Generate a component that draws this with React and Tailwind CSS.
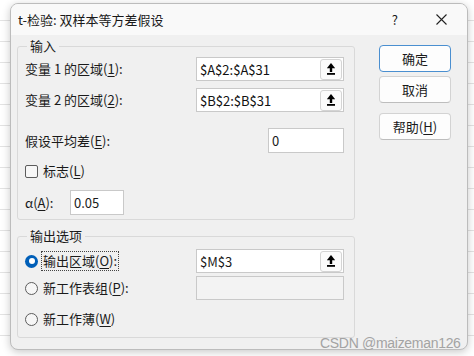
import React from "react";

function UpArrow() {
  return (
    <svg width="10" height="14" viewBox="0 0 10 14">
      <polygon points="5,1 0.8,6.2 9.2,6.2" fill="#000" />
      <rect x="3.8" y="5.5" width="2.4" height="4.5" fill="#000" />
      <rect x="1" y="11" width="8" height="1.8" fill="#000" />
    </svg>
  );
}

function RefInput({ value, w = "w-[148px]" }) {
  return (
    <div className={`${w} h-full bg-white border border-[#c9c9c9] flex items-center justify-between pl-[3px] pr-[1px]`}>
      <span className="text-[13px] leading-none text-[#111]">{value}</span>
      <div className="w-[22px] h-[21px] border border-[#d4d4d4] rounded-[3px] bg-[#fbfbfb] flex items-center justify-center">
        <UpArrow />
      </div>
    </div>
  );
}

function U({ children }) {
  return <span className="underline underline-offset-2">{children}</span>;
}

function Radio({ checked }) {
  return checked ? (
    <div className="w-[13px] h-[13px] rounded-full bg-[#005fb8] flex items-center justify-center">
      <div className="w-[6px] h-[6px] rounded-full bg-white" />
    </div>
  ) : (
    <div className="w-[13px] h-[13px] rounded-full border border-[#5c5c5c] bg-[#f6f6f6]" />
  );
}

export default function App() {
  return (
    <div className="w-[474px] h-[356px] overflow-hidden relative bg-white bg-[repeating-linear-gradient(180deg,transparent_0px,transparent_20px,#e3e3e3_20px,#e3e3e3_21px)] pl-[10px] pt-[3px] font-['Noto_Sans_CJK_SC',sans-serif] text-[#1a1a1a]">
      <div className="w-[458px] h-[347px] rounded-[8px] bg-[#f0f0f0] border border-[#bcbcbc] shadow-[0_2px_8px_rgba(0,0,0,0.22)] flex flex-col overflow-hidden">
        {/* title bar */}
        <div className="h-[31px] shrink-0 bg-[#f9f9f9] flex items-center pl-[7px]">
          <span className="text-[13px] leading-none">t-检验: 双样本等方差假设</span>
          <div className="ml-auto flex items-center">
            <span className="text-[13px] leading-none mr-[38px]">?</span>
            <svg width="11" height="11" viewBox="0 0 11 11" className="mr-[20px]">
              <path d="M0.5 0.5 L10.5 10.5 M10.5 0.5 L0.5 10.5" stroke="#222" strokeWidth="1.1" />
            </svg>
          </div>
        </div>
        {/* body */}
        <div className="flex pl-[6px] pt-[2px]">
          <div className="w-[338px] flex flex-col">
            <fieldset className="border border-[#d9d9d9] rounded-[3px] pl-[7px] pr-[10px] pb-[4px]">
              <legend className="ml-[2px] px-[3px] text-[13px] leading-[18px]">输入</legend>
              <div className="mt-[2px] h-[24px] flex items-center justify-between">
                <span className="text-[13px]">变量 1 的区域(<U>1</U>):</span>
                <RefInput value="$A$2:$A$31" />
              </div>
              <div className="mt-[7px] h-[24px] flex items-center justify-between">
                <span className="text-[13px]">变量 2 的区域(<U>2</U>):</span>
                <RefInput value="$B$2:$B$31" />
              </div>
              <div className="mt-[16px] h-[25px] flex items-center justify-between">
                <span className="text-[13px]">假设平均差(<U>E</U>):</span>
                <div className="w-[76px] h-full bg-white border border-[#c9c9c9] flex items-center pl-[3px]">
                  <span className="text-[13px] leading-none">0</span>
                </div>
              </div>
              <div className="mt-[10px] h-[16px] flex items-center gap-[5px]">
                <div className="w-[13px] h-[13px] border border-[#5c5c5c] rounded-[2px] bg-[#f7f7f7]" />
                <span className="text-[13px]">标志(<U>L</U>)</span>
              </div>
              <div className="mt-[11px] h-[25px] flex items-center">
                <span className="w-[45px] text-[13px]">α(<U>A</U>):</span>
                <div className="w-[54px] h-full bg-white border border-[#c9c9c9] flex items-center pl-[3px]">
                  <span className="text-[13px] leading-none">0.05</span>
                </div>
              </div>
            </fieldset>
            <fieldset className="mt-[7px] border border-[#d9d9d9] rounded-[3px] pl-[7px] pr-[10px] pb-[8px]">
              <legend className="ml-[2px] px-[3px] text-[13px] leading-[18px]">输出选项</legend>
              <div className="mt-[4px] h-[24px] flex items-center justify-between">
                <div className="flex items-center gap-[3px]">
                  <Radio checked />
                  <span className="text-[13px] leading-[18px] border border-dotted border-[#444] px-[1px]">输出区域(<U>O</U>):</span>
                </div>
                <div className="w-[148px] h-full bg-white border border-[#c9c9c9] flex items-center justify-between pl-[3px] pr-[1px]">
                  <span className="text-[13px] leading-none">$M$3</span>
                  <div className="w-[22px] h-[21px] border border-[#d4d4d4] rounded-[3px] bg-[#fbfbfb] flex items-center justify-center">
                    <UpArrow />
                  </div>
                </div>
              </div>
              <div className="mt-[3px] h-[24px] flex items-center justify-between">
                <div className="flex items-center gap-[5px]">
                  <Radio />
                  <span className="text-[13px]">新工作表组(<U>P</U>):</span>
                </div>
                <div className="w-[148px] h-full bg-[#f3f3f3] border border-[#c9c9c9]" />
              </div>
              <div className="mt-[9px] h-[20px] flex items-center gap-[5px]">
                <Radio />
                <span className="text-[13px]">新工作薄(<U>W</U>)</span>
              </div>
            </fieldset>
          </div>
          <div className="ml-[24px] mt-[8px] w-[72px] flex flex-col">
            <button className="h-[27px] rounded-[4px] bg-[#fdfdfd] border border-[#4a8fd0] text-[13px] leading-none">确定</button>
            <button className="mt-[4px] h-[27px] rounded-[4px] bg-[#fdfdfd] border border-[#d3d3d3] border-b-[#bdbdbd] text-[13px] leading-none">取消</button>
            <button className="mt-[10px] h-[27px] rounded-[4px] bg-[#fdfdfd] border border-[#d3d3d3] border-b-[#bdbdbd] text-[13px] leading-none">帮助(<U>H</U>)</button>
          </div>
        </div>
      </div>
      <div className="absolute left-[320px] top-[333px] font-['Liberation_Sans',sans-serif] text-[14px] tracking-[-0.3px] text-[#a3a3a3]">
        CSDN @maizeman126
      </div>
    </div>
  );
}
